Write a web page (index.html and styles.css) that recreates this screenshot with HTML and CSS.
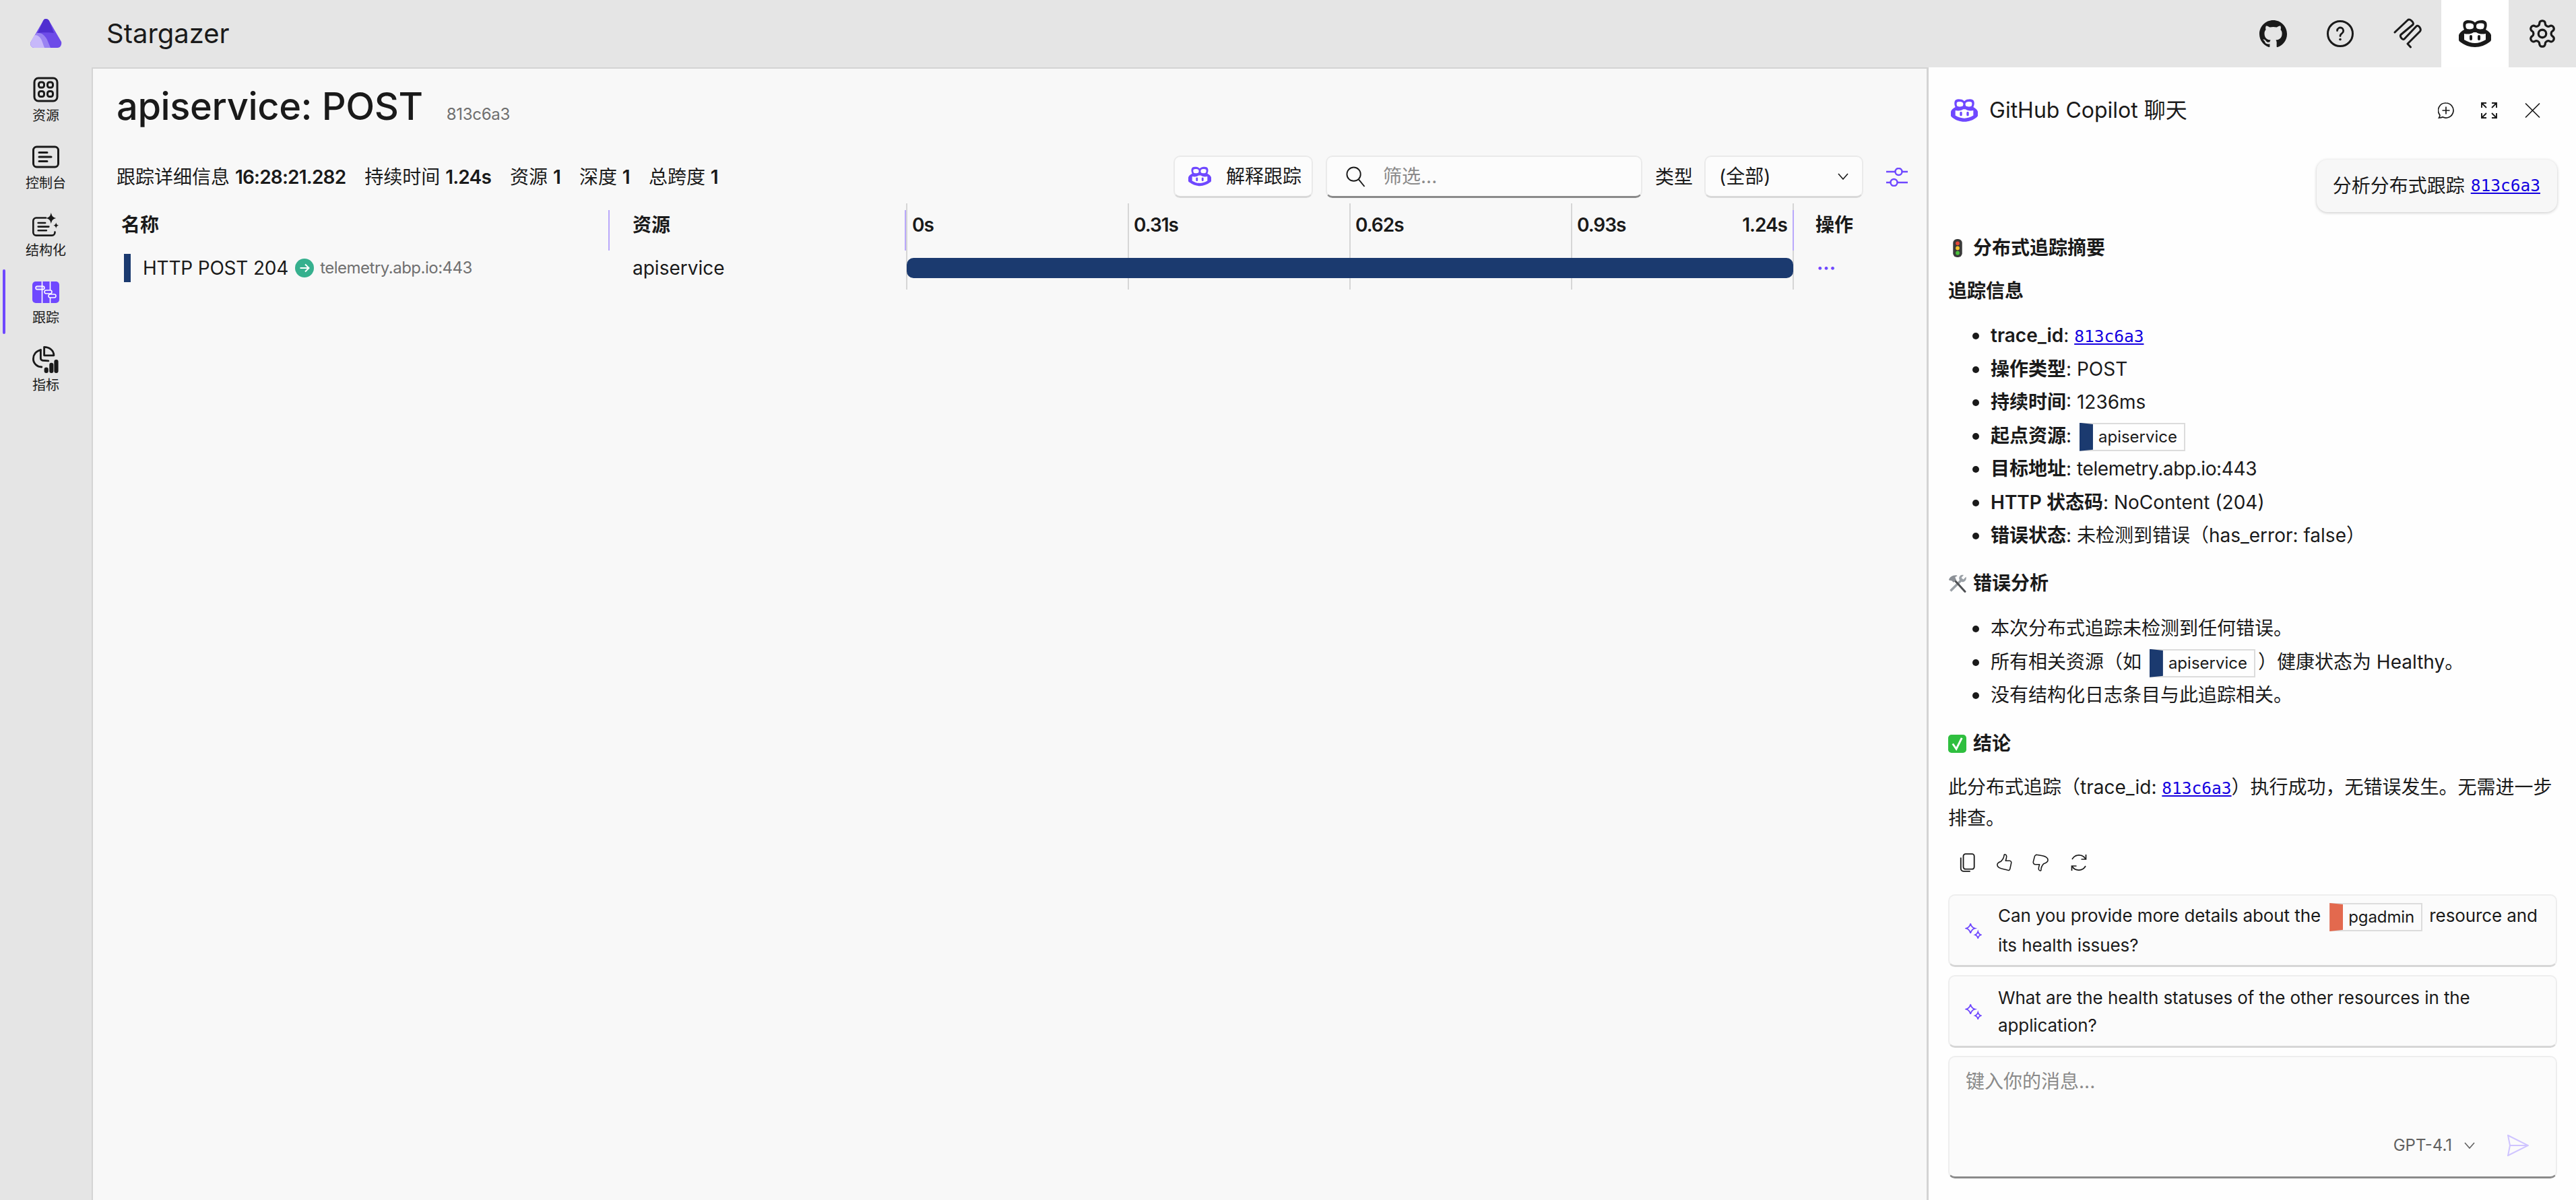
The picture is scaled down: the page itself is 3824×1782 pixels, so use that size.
FILE: index.html
```html
<!DOCTYPE html>
<html lang="zh-CN">
<head>
    <meta charset="UTF-8">
    <meta name="viewport" content="width=device-width, initial-scale=1.0">
    <title>Stargazer</title>
    <link rel="stylesheet" href="styles.css">
</head>
<body>
    <svg class="sprite" aria-hidden="true">
        <symbol id="copilot" viewBox="0 0 48 40">
            <path fill="currentColor" fill-rule="evenodd" d="M24 3.5C21.5.8 17.5 0 14 0 10 0 7 1.500 6.500 5 6 8 6.500 11 8 14 4 16 1 19 0 22v7c0 1.500 1 2.500 2.500 3.500C8 37 16 40 24 40s16-3 21.500-7.500c1.500-1 2.500-2 2.500-3.500v-7c-1-3-4-6-8-8 1.500-3 2-6 1.500-9C41 1.500 38 0 34 0c-3.500 0-7.500.8-10 3.500zM11 5.500c2-1.500 9-1.500 10.500 1 .8 1.500.8 4-.2 5.500-1.500 1.500-7 2-9.500.5-1.500-1-2-5.500-.8-7zM37 5.500c-2-1.500-9-1.500-10.500 1-.8 1.500-.8 4 .2 5.500 1.500 1.500 7 2 9.500.5 1.500-1 2-5.500.8-7zM8 20c4 1 10 1 14-2h4c4 3 10 3 14 2v9c-5 3-11 5-16 5s-11-2-16-5zM16 24a2 2 0 0 1 4 0v4a2 2 0 0 1-4 0zM28 24a2 2 0 0 1 4 0v4a2 2 0 0 1-4 0z"/>
        </symbol>
        <symbol id="sparkle" viewBox="0 0 26 24">
            <path fill="none" stroke="currentColor" stroke-width="1.800" d="M8.500 1c1 4 3 6.500 6.800 7.500C11.500 9.500 9.500 12 8.500 16c-1-4-3-6.500-6.800-7.500C5.500 7.500 7.500 5 8.500 1zM20 13.500c.7 2.500 1.800 4 4.500 5-2.700 1-3.800 2.500-4.500 5-.7-2.500-1.800-4-4.500-5 2.700-1 3.800-2.500 4.500-5z"/>
        </symbol>
        <symbol id="chevron" viewBox="0 0 16 10">
            <path fill="none" stroke="currentColor" stroke-width="1.600" d="M1 1l7 8 7-8"/>
        </symbol>
    </svg>

    <header class="topbar">
        <svg class="logo" viewBox="0 0 48 43">
            <path fill="#6d4be8" d="M24 0c-2 0-3 1-4 3L2 34c-2 3 0 9 5 9h34c5 0 7-5 6-9L29 3c-1-2-3-3-5-3z"/>
            <path fill="#4f2fd0" d="M24 0c-2 0-3 1-4 3l-8 18c4-1 20-1 24 0L29 3c-1-2-3-3-5-3z"/>
            <path fill="#9a83f2" d="M14 21c4 0 9 4 12 10l5 12H7c-5 0-7-6-5-9l8-13z"/>
            <path fill="#c7b8fa" d="M8 24c4 0 8 3 10 8l4 11H7c-5 0-7-6-5-9l4-8z"/>
        </svg>
        <span class="app-name">Stargazer</span>
        <nav class="top-actions">
            <a class="top-btn"><svg class="ic-github" viewBox="0 0 16 16"><path fill="currentColor" d="M8 0C3.580 0 0 3.580 0 8c0 3.540 2.290 6.530 5.470 7.590.4.070.550-.170.550-.380 0-.190-.010-.820-.010-1.490-2.010.370-2.530-.490-2.690-.940-.090-.230-.480-.940-.820-1.130-.280-.150-.680-.520-.010-.530.630-.010 1.080.580 1.230.820.720 1.210 1.870.870 2.330.660.070-.520.280-.870.510-1.070-1.780-.200-3.640-.890-3.640-3.950 0-.870.310-1.590.820-2.150-.080-.200-.360-1.020.080-2.120 0 0 .670-.210 2.200.820.640-.180 1.320-.270 2-.270.680 0 1.360.090 2 .270 1.530-1.040 2.200-.820 2.200-.820.440 1.100.160 1.920.080 2.120.510.560.820 1.270.820 2.150 0 3.070-1.870 3.750-3.650 3.950.290.250.540.730.540 1.480 0 1.070-.010 1.930-.010 2.200 0 .210.150.460.550.380A8.013 8.013 0 0016 8c0-4.420-3.580-8-8-8z"/></svg></a>
            <a class="top-btn"><svg class="ic-help" viewBox="0 0 40 40" fill="none" stroke="currentColor" stroke-width="3"><circle cx="20" cy="20" r="18.500"/><path stroke-width="2.800" stroke-linecap="round" d="M15.500 15.500a4.600 4.600 0 1 1 7.200 3.900c-1.700 1.100-2.700 2-2.700 4.100"/><circle cx="20" cy="28.500" r="1.800" fill="currentColor" stroke="none"/></svg></a>
            <a class="top-btn"><svg class="ic-spring" viewBox="0 0 40 44" fill="none" stroke="currentColor" stroke-width="3" stroke-linecap="round" stroke-linejoin="round"><path d="M1 20L20 2c3-3 10 3 8 6.500L10 23.500c-2 2.500 2 8.500 5 6.500L33 11c3-3 8 4 5.500 7.500L20 37l4.500 5"/></svg></a>
            <a class="top-btn is-open"><svg class="ic-copilot"><use href="#copilot"/></svg></a>
            <a class="top-btn"><svg class="ic-gear" viewBox="0 0 24 24" fill="none" stroke="currentColor" stroke-width="1.700"><path d="M12.220 2h-.440a2 2 0 0 0-2 2v.180a2 2 0 0 1-1 1.730l-.430.250a2 2 0 0 1-2 0l-.150-.080a2 2 0 0 0-2.730.730l-.220.380a2 2 0 0 0 .730 2.730l.150.100a2 2 0 0 1 1 1.720v.510a2 2 0 0 1-1 1.740l-.150.090a2 2 0 0 0-.730 2.730l.220.380a2 2 0 0 0 2.730.730l.150-.080a2 2 0 0 1 2 0l.430.250a2 2 0 0 1 1 1.730V20a2 2 0 0 0 2 2h.440a2 2 0 0 0 2-2v-.180a2 2 0 0 1 1-1.730l.430-.250a2 2 0 0 1 2 0l.150.080a2 2 0 0 0 2.730-.730l.220-.390a2 2 0 0 0-.730-2.730l-.150-.080a2 2 0 0 1-1-1.740v-.500a2 2 0 0 1 1-1.740l.150-.090a2 2 0 0 0 .730-2.730l-.220-.380a2 2 0 0 0-2.730-.730l-.150.080a2 2 0 0 1-2 0l-.430-.250a2 2 0 0 1-1-1.730V4a2 2 0 0 0-2-2z"/><circle cx="12" cy="12" r="3"/></svg></a>
        </nav>
    </header>

    <div class="layout">
        <aside class="sidebar">
            <a class="side-item">
                <svg class="side-icon" viewBox="0 0 40 40" fill="none" stroke="currentColor" stroke-width="3"><rect x="3" y="2" width="34" height="34" rx="6"/><rect x="9.500" y="8" width="8" height="8" rx="3"/><rect x="22.500" y="8" width="8" height="8" rx="3"/><rect x="9.500" y="21.500" width="8" height="8" rx="3"/><rect x="22.500" y="21.500" width="8" height="8" rx="3"/></svg>
                <span>资源</span>
            </a>
            <a class="side-item">
                <svg class="side-icon" viewBox="0 0 40 40" fill="none" stroke="currentColor" stroke-width="3" stroke-linecap="round"><rect x="1.500" y="4" width="37" height="30" rx="5"/><path d="M10 12.500h12M10 19h18M10 25.500h12"/></svg>
                <span>控制台</span>
            </a>
            <a class="side-item">
                <svg class="side-icon" viewBox="0 0 46 42" fill="none" stroke="currentColor" stroke-width="3" stroke-linecap="round"><path d="M23 9H6.500a5 5 0 0 0-5 5v20a5 5 0 0 0 5 5h27a5 5 0 0 0 5-5v-1"/><path d="M10 17.500h12M10 24h18M10 30.500h14"/><path fill="currentColor" stroke="none" d="M32 0c1.200 6 3.500 8.400 8.500 9.500C35.500 10.600 33.200 13 32 19c-1.200-6-3.500-8.400-8.500-9.500C28.500 8.400 30.800 6 32 0zM40.500 17c.7 3.300 1.800 4.400 4.500 5-2.700.6-3.800 1.700-4.500 5-.7-3.300-1.800-4.400-4.500-5 2.700-.6 3.800-1.700 4.500-5z"/></svg>
                <span>结构化</span>
            </a>
            <a class="side-item is-active">
                <svg class="side-icon" viewBox="0 0 40 40"><rect y="4" width="40" height="32" rx="5" fill="#6f48ff"/><path stroke="#fff" stroke-width="1.600" d="M14.500 4v32M26.500 4v32"/><rect x="5" y="11" width="13" height="5" rx="2.500" fill="#fff" fill-opacity=".25" stroke="#fff" stroke-width="1.500"/><rect x="18" y="17" width="11" height="5" rx="2.500" fill="#6f48ff" stroke="#fff" stroke-width="1.500"/><rect x="24" y="23" width="11" height="5" rx="2.500" fill="#6f48ff" stroke="#fff" stroke-width="1.500"/></svg>
                <span>跟踪</span>
            </a>
            <a class="side-item">
                <svg class="side-icon" viewBox="0 0 42 42" fill="none" stroke="currentColor" stroke-width="3"><path stroke-linecap="round" d="M13 6C5 8 1.500 14 1.500 20c0 7 6 12.500 13 12.500"/><path stroke-linejoin="round" d="M18.500 1.500v13h15c0-8-7-13-15-13z"/><path stroke-linecap="round" d="M13 6v13c0 2 1 3 3 3.300l9 .7"/><g stroke="none" fill="currentColor"><rect x="18.500" y="33" width="6.500" height="9" rx="3.200"/><rect x="26.500" y="26" width="6.500" height="16" rx="3.200"/><rect x="34" y="21" width="6.500" height="21" rx="3.200"/></g></svg>
                <span>指标</span>
            </a>
        </aside>

        <main class="main">
            <div class="title-row">
                <h1>apiservice: POST</h1>
                <span class="trace-hash">813c6a3</span>
            </div>

            <div class="toolbar">
                <div class="details">
                    <span>跟踪详细信息 <b>16:28:21.282</b></span>
                    <span>持续时间 <b>1.24s</b></span>
                    <span>资源 <b>1</b></span>
                    <span>深度 <b>1</b></span>
                    <span>总跨度 <b>1</b></span>
                </div>
                <div class="controls">
                    <button class="explain-btn"><svg class="ic-explain"><use href="#copilot"/></svg>解释跟踪</button>
                    <label class="filter">
                        <svg class="ic-search" viewBox="0 0 30 32" fill="none" stroke="currentColor" stroke-width="2"><circle cx="12" cy="12" r="10.500"/><path d="M19.500 20l9 11"/></svg>
                        <input type="text" placeholder="筛选...">
                    </label>
                    <span class="type-label">类型</span>
                    <div class="type-select">(全部)<svg class="ic-chevron"><use href="#chevron"/></svg></div>
                    <svg class="ic-tune" viewBox="0 0 32 28" fill="none" stroke="#6f48ff" stroke-width="2.500"><path d="M0 6h13M24 6h8M0 22h6M17 22h15"/><circle cx="18.500" cy="6" r="5"/><circle cx="11.500" cy="22" r="5"/></svg>
                </div>
            </div>

            <div class="trace-table">
                <div class="ticks"><i></i><i></i><i></i><i></i></div>

                <div class="th th-line">名称</div>
                <div class="th th-line">资源</div>
                <div class="th th-line th-time">
                    <span>0s</span><span>0.31s</span><span>0.62s</span><span class="last-tick"><span>0.93s</span><span>1.24s</span></span>
                </div>
                <div class="th th-ops">操作</div>

                <div class="td td-name">
                    <i class="color-bar"></i>
                    <span class="span-name">HTTP POST 204</span>
                    <svg class="ic-out" viewBox="0 0 28 28"><circle cx="14" cy="14" r="14" fill="#36b08e"/><path fill="none" stroke="#fff" stroke-width="2" d="M7.500 14h12.500M15 8.500l5.500 5.500-5.500 5.500"/></svg>
                    <span class="span-target">telemetry.abp.io:443</span>
                </div>
                <div class="td">apiservice</div>
                <div class="td td-bar"><div class="bar"></div></div>
                <div class="td td-more">···</div>
            </div>
        </main>

        <section class="chat">
            <div class="chat-head">
                <svg class="ic-chat-logo"><use href="#copilot"/></svg>
                <h2>GitHub Copilot 聊天</h2>
                <div class="chat-tools">
                    <svg viewBox="0 0 24 24" fill="none" stroke="currentColor" stroke-width="1.700"><path d="M12 1a11 11 0 1 1-5 20.800c-1.500 1-3 1.300-5.500 1.200 1-1 1.500-2.500 1.300-4.300A11 11 0 0 1 12 1z"/><path d="M12 6.500v11M6.500 12h11"/></svg>
                    <svg viewBox="0 0 24 24" fill="none" stroke="currentColor" stroke-width="1.900"><path d="M8 1H1v7M1 1l7 7M16 1h7v7M23 1l-7 7M8 23H1v-7M1 23l7-7M16 23h7v-7M23 23l-7-7"/></svg>
                    <svg viewBox="0 0 24 24" fill="none" stroke="currentColor" stroke-width="1.700"><path d="M2 1.500l21 21M23 1.500l-21 21"/></svg>
                </div>
            </div>

            <div class="messages">
                <div class="user-row">
                    <div class="bubble">分析分布式跟踪 <a class="hash-link">813c6a3</a></div>
                </div>

                <h3 class="msg-h"><svg class="emoji emoji-light" viewBox="0 0 14 28"><rect width="14" height="28" rx="6" fill="#3a3a3a"/><circle cx="7" cy="6.500" r="3" fill="#e5483a"/><circle cx="7" cy="14" r="3" fill="#f3c52f"/><circle cx="7" cy="21.500" r="3" fill="#4cc13d"/></svg>分布式追踪摘要</h3>
                <p class="msg-sub"><b>追踪信息</b></p>
                <ul class="msg-list">
                    <li><b>trace_id</b>: <a class="hash-link">813c6a3</a></li>
                    <li><b>操作类型</b>: POST</li>
                    <li><b>持续时间</b>: 1236ms</li>
                    <li><b>起点资源</b>: <span class="chip"><i class="chip-navy"></i>apiservice</span></li>
                    <li><b>目标地址</b>: <span class="tight">telemetry.abp.io:443</span></li>
                    <li><b>HTTP 状态码</b>: NoContent (204)</li>
                    <li><b>错误状态</b>: 未检测到错误（has_error: false）</li>
                </ul>

                <h3 class="msg-h msg-h-tools"><svg class="emoji" viewBox="0 0 27 27"><path fill="none" stroke="#9aa0a6" stroke-width="3.500" d="M21 7L3.500 24.500"/><path fill="#9aa0a6" d="M26.500 3.500L22.500 7.500 19.500 5 23 1c-4-1.500-8 2-6.500 6.500L20 11c4 1.500 8-3 6.500-7.500z"/><path fill="none" stroke="#4d4f52" stroke-width="3" stroke-linecap="round" d="M9 8l16 17.500"/><path fill="#8b9096" d="M1 8c1-4 6-7.500 12-6.500 1 .5 0 1.500-1 1.500-1.500.3-2 1.500-1 3l1 2-4 4-2.500-2.500C4 9 2 9.500 1 8z"/></svg>错误分析</h3>
                <ul class="msg-list list-tools">
                    <li>本次分布式追踪未检测到任何错误。</li>
                    <li>所有相关资源（如 <span class="chip"><i class="chip-navy"></i>apiservice</span>）健康状态为 Healthy。</li>
                    <li>没有结构化日志条目与此追踪相关。</li>
                </ul>

                <h3 class="msg-h msg-h-done"><svg class="emoji" viewBox="0 0 28 28"><rect width="28" height="28" rx="5" fill="#2fbf3f"/><path fill="none" stroke="#fff" stroke-width="3" d="M7 14l5.500 8L21 5"/></svg>结论</h3>
                <p class="msg-end">此分布式追踪（trace_id: <a class="hash-link">813c6a3</a>）执行成功，无错误发生。无需进一步排查。</p>

                <div class="msg-actions">
                    <svg viewBox="0 0 22 26" fill="none" stroke="currentColor" stroke-width="1.700"><rect x="5" y="1" width="15" height="21" rx="3"/><path d="M1.500 6v15a4 4 0 0 0 4 4h9"/></svg>
                    <svg viewBox="0 0 26 28" fill="none" stroke="currentColor" stroke-width="1.700" stroke-linejoin="round"><path d="M8 12c3-3 5-6 5-10 0-2 4-1.500 4 2 0 2-.5 4-1.500 7H22c2 0 3 2 2.500 4l-2 9c-.5 2-2 3-4 2l-6-1.500C7 23.500 2 22 2 17.500 2 15 5 13 8 12z"/></svg>
                    <svg viewBox="0 0 26 28" fill="none" stroke="currentColor" stroke-width="1.700" stroke-linejoin="round"><path d="M18 16c-3 3-4 6-4 10 0 2-4 1-4-2 0-2 .5-4 1.500-7H5c-2.500 0-4-2-3.500-4.500l2-8C4 2 6 1 8 1.500l8 1.500c5 1 9 3 9 7 0 3-4 5-7 6z"/></svg>
                    <svg class="ic-retry" viewBox="0 0 30 30" fill="none" stroke="currentColor" stroke-width="1.700"><path d="M5 10a11.500 11.500 0 0 1 20-.5M25 20a11.500 11.500 0 0 1-20 .5"/><path d="M25.500 3v7h-7M4.500 27v-7h7"/></svg>
                </div>
            </div>

            <div class="suggestions">
                <div class="suggest">
                    <svg class="ic-sparkle"><use href="#sparkle"/></svg>
                    <div>Can you provide more details about the <span class="chip chip-small"><i class="chip-red"></i>pgadmin</span> resource and its health issues?</div>
                </div>
                <div class="suggest">
                    <svg class="ic-sparkle"><use href="#sparkle"/></svg>
                    <div>What are the health statuses of the other resources in the application?</div>
                </div>
            </div>

            <div class="composer">
                <textarea placeholder="键入你的消息..."></textarea>
                <div class="composer-foot">
                    <span class="model">GPT-4.1<svg class="ic-chevron"><use href="#chevron"/></svg></span>
                    <svg class="ic-send" viewBox="0 0 32 32" fill="none" stroke="#cfc4ff" stroke-width="2"><path d="M1 1l30 15L1 31l3-15zM4 16h27"/></svg>
                </div>
            </div>
        </section>
    </div>
</body>
</html>
```

FILE: styles.css
```css
* {
    box-sizing: border-box;
}
html, body {
    height: 100%;
}
body {
    margin: 0;
    font-family: Inter, "Noto Sans CJK SC", sans-serif;
    font-size: 28px;
    line-height: 44px;
    color: #1a1a1a;
    background-color: #e5e5e5;
    display: flex;
    flex-direction: column;
    overflow: hidden;
}
.sprite {
    position: absolute;
    width: 0;
    height: 0;
}
b {
    font-weight: 600;
}
.tight {
    letter-spacing: -0.4px;
}

/* top bar */
.topbar {
    height: 100px;
    flex: none;
    display: flex;
    align-items: center;
}
.logo {
    width: 48px;
    height: 43px;
    margin-left: 44px;
    margin-top: -2px;
}
.app-name {
    margin-left: 66px;
    font-size: 40px;
}
.top-actions {
    margin-left: auto;
    display: flex;
    height: 100%;
}
.top-btn {
    width: 100px;
    display: flex;
    align-items: center;
    justify-content: center;
}
.top-btn.is-open {
    background-color: #fff;
}
.ic-github { width: 41px; height: 41px; }
.ic-help { width: 40px; height: 40px; }
.ic-spring { width: 40px; height: 44px; overflow: visible; }
.ic-copilot { width: 48px; height: 42px; }
.ic-gear { width: 46px; height: 46px; }

.layout {
    flex: 1;
    display: flex;
    min-height: 0;
}

/* left nav */
.sidebar {
    width: 136px;
    flex: none;
}
.side-item {
    height: 100px;
    display: flex;
    flex-direction: column;
    align-items: center;
    justify-content: flex-end;
    font-size: 20px;
    line-height: 28px;
    padding-bottom: 14px;
    position: relative;
}
.side-icon {
    width: 40px;
    height: 40px;
    margin-bottom: 4px;
}
.side-item.is-active::before {
    content: "";
    position: absolute;
    left: 4px;
    top: 0;
    bottom: 4px;
    width: 4px;
    border-radius: 2px;
    background-color: #6f48ff;
}

/* main */
.main {
    width: 2724px;
    flex: none;
    background-color: #f8f8f8;
    border-top: 2px solid #d4d4d4;
    border-left: 2px solid #d4d4d4;
    padding-left: 32px;
    padding-right: 28px;
}
.title-row {
    display: flex;
    align-items: baseline;
    padding-left: 3px;
    padding-top: 24px;
}
h1 {
    margin: 0;
    font-size: 56px;
    line-height: 64px;
    font-weight: 500;
    letter-spacing: -0.4px;
}
.trace-hash {
    margin-left: 35px;
    font-size: 24px;
    letter-spacing: -0.3px;
    color: #6f6f6f;
}
.toolbar {
    margin-top: 39px;
    height: 63px;
    display: flex;
    align-items: center;
    justify-content: space-between;
    padding-left: 3px;
}
.details {
    display: flex;
    gap: 28px;
}
.details b {
    letter-spacing: -0.8px;
}
.controls {
    display: flex;
    align-items: center;
}
.explain-btn {
    width: 207px;
    height: 63px;
    display: flex;
    align-items: center;
    padding: 0 0 0 20px;
    font: inherit;
    color: inherit;
    background-color: #fcfcfc;
    border: 2px solid #eaeaea;
    border-bottom: 3px solid #d8d8d8;
    border-radius: 10px;
}
.ic-explain {
    width: 34px;
    height: 38px;
    color: #6f48ff;
    margin-right: 22px;
}
.filter {
    width: 470px;
    height: 63px;
    margin-left: 19px;
    display: flex;
    align-items: center;
    padding-left: 28px;
    background-color: #fcfcfc;
    border: 2px solid #eaeaea;
    border-bottom: 3px solid #8a8a8a;
    border-radius: 10px;
}
.ic-search {
    width: 29px;
    height: 31px;
    flex: none;
}
.filter input {
    flex: 1;
    min-width: 0;
    border: none;
    outline: none;
    background: none;
    font: inherit;
    padding: 0;
    margin-left: 26px;
}
.filter input::placeholder, .composer textarea::placeholder {
    color: #8a8a8a;
    opacity: 1;
}
.type-label {
    margin-left: 19px;
    width: 56px;
    white-space: nowrap;
}
.type-select {
    width: 236px;
    height: 63px;
    margin-left: 17px;
    display: flex;
    align-items: center;
    justify-content: space-between;
    padding: 0 20px;
    background-color: #fcfcfc;
    border: 2px solid #eaeaea;
    border-bottom: 3px solid #d8d8d8;
    border-radius: 10px;
}
.ic-chevron {
    width: 16px;
    height: 10px;
}
.ic-tune {
    width: 32px;
    height: 28px;
    margin-left: 34px;
}

/* trace table */
.trace-table {
    position: relative;
    margin-top: 8px;
    display: grid;
    grid-template-columns: 735px 440px 1318px 1fr;
    padding-bottom: 11px;
}
.ticks {
    position: absolute;
    left: 1175px;
    top: 0;
    bottom: 0;
    width: 1318px;
    display: grid;
    grid-template-columns: repeat(4, 1fr);
    border-right: 2px solid #d6d6d6;
}
.ticks i {
    border-left: 2px solid #d6d6d6;
}
.th {
    position: relative;
    margin-top: 10px;
    height: 60px;
    font-weight: 600;
    padding-left: 10px;
}
.th + .th {
    padding-left: 34px;
}
.th-line {
    border-right: 2px solid #b9a8fb;
}
.th.th-time {
    display: grid;
    grid-template-columns: repeat(4, 1fr);
    padding-left: 0;
    letter-spacing: -1px;
}
.th-time > span {
    padding-left: 9px;
}
.last-tick {
    display: flex;
    justify-content: space-between;
    padding-right: 8px;
}
.th.th-ops {
    padding-left: 32px;
}
.td {
    position: relative;
    height: 42px;
    margin-top: 5px;
    display: flex;
    align-items: center;
    padding-left: 34px;
}
.td-name {
    padding-left: 14px;
}
.color-bar {
    width: 10px;
    height: 42px;
    background-color: #1b3a6f;
    margin-right: 18px;
}
.span-name {
    letter-spacing: -0.2px;
}
.ic-out {
    width: 28px;
    height: 28px;
    margin-left: 10px;
    margin-right: 9px;
}
.span-target {
    font-size: 24px;
    letter-spacing: -0.5px;
    color: #707070;
}
.td.td-bar {
    padding-left: 0;
    padding-right: 1px;
}
.bar {
    width: 100%;
    height: 30px;
    margin-left: 1px;
    border-radius: 10px;
    background-color: #1b3a6f;
}
.td-more {
    color: #6f48ff;
    font-weight: 700;
}

/* chat panel */
.chat {
    flex: 1;
    min-width: 0;
    display: flex;
    flex-direction: column;
    background-color: #fefefe;
    border-left: 3px solid #d4d4d4;
    padding: 0 28px 32px 29px;
}
.chat-head {
    height: 128px;
    flex: none;
    display: flex;
    align-items: center;
    padding-left: 4px;
}
.ic-chat-logo {
    width: 40px;
    height: 36px;
    color: #6f48ff;
}
h2 {
    margin: 0 0 0 17px;
    font-size: 32px;
    font-weight: 400;
}
.chat-tools {
    margin-left: auto;
    display: flex;
    gap: 40px;
    margin-right: 25px;
}
.chat-tools svg {
    width: 24px;
    height: 24px;
}
.messages {
    flex: 1;
    min-height: 0;
}
.user-row {
    display: flex;
    justify-content: flex-end;
    padding-top: 9px;
}
.bubble {
    height: 78px;
    display: flex;
    align-items: center;
    gap: 9px;
    padding: 0 25px 0 24px;
    background-color: #f7f7f7;
    border-radius: 16px;
    box-shadow: 0 1px 4px rgba(0, 0, 0, 0.22);
}
.hash-link {
    font-family: "DejaVu Sans Mono", monospace;
    font-size: 24.5px;
    color: #1400e0;
    text-decoration: underline;
}
.msg-h {
    margin: 31px 0 0;
    font-size: 28px;
    font-weight: 600;
    display: flex;
    align-items: center;
}
.emoji {
    width: 27px;
    height: 27px;
    margin-right: 10px;
}
.emoji-light {
    width: 14px;
    margin-left: 7px;
    margin-right: 16px;
}
.msg-sub {
    margin: 20px 0 0;
}
.msg-list {
    list-style: none;
    margin: 22px 0 0;
    padding: 0 0 0 63px;
}
.msg-list li {
    position: relative;
    height: 44px;
    margin-bottom: 5.500px;
    white-space: nowrap;
}
.msg-list li::before {
    content: "";
    position: absolute;
    left: -27px;
    top: 18px;
    width: 10px;
    height: 10px;
    border-radius: 50%;
    background-color: #1a1a1a;
}
.msg-h-tools {
    margin-top: 27px;
}
.list-tools {
    margin-top: 23px;
}
.msg-h-done {
    margin-top: 28px;
}
.msg-end {
    margin: 21px 0 0;
}
.chip {
    display: inline-flex;
    align-items: center;
    height: 42px;
    padding-right: 10px;
    border: 2px solid #dcdcdc;
    font-size: 24px;
    line-height: 38px;
    vertical-align: middle;
    margin: 0 4px;
}
.chip-small {
    margin: 0 3px 0 6px;
}
.chip i {
    width: 20px;
    height: 42px;
    margin: -2px 8px -2px -2px;
    clip-path: polygon(0 0, 100% 5%, 100% 95%, 0 100%);
}
.chip-navy {
    background-color: #1b3a6f;
}
.chip-red {
    background-color: #e3694e;
}
.msg-actions {
    margin-top: 30px;
    padding-left: 17px;
    display: flex;
    align-items: center;
    gap: 30px;
    height: 28px;
}
.msg-actions svg {
    height: 28px;
    width: 24px;
}
.msg-actions .ic-retry {
    width: 30px;
    height: 30px;
}
.suggestions {
    flex: none;
    display: flex;
    flex-direction: column;
    gap: 12px;
}
.suggest {
    height: 108px;
    display: flex;
    align-items: center;
    gap: 24px;
    padding: 0 10px 0 23px;
    font-size: 26px;
    line-height: 41px;
    letter-spacing: -0.1px;
    background-color: #fbfbfb;
    border: 2px solid #eeeeee;
    border-bottom: 3px solid #d6d6d6;
    border-radius: 10px;
}
.ic-sparkle {
    width: 25px;
    height: 24px;
    flex: none;
    color: #6f48ff;
}
.composer {
    flex: none;
    height: 182px;
    margin-top: 12px;
    display: flex;
    flex-direction: column;
    padding: 14px 40px 24px 24px;
    background-color: #fbfbfb;
    border: 2px solid #eeeeee;
    border-bottom: 3px solid #8a8a8a;
    border-radius: 10px;
}
.composer textarea {
    flex: 1;
    border: none;
    outline: none;
    resize: none;
    padding: 0;
    background: none;
    font: inherit;
}
.composer-foot {
    display: flex;
    align-items: center;
    justify-content: flex-end;
}
.model {
    display: flex;
    align-items: center;
    gap: 18px;
    font-size: 24px;
    color: #616161;
    margin-right: 48px;
}
.ic-send {
    width: 32px;
    height: 32px;
}
```
